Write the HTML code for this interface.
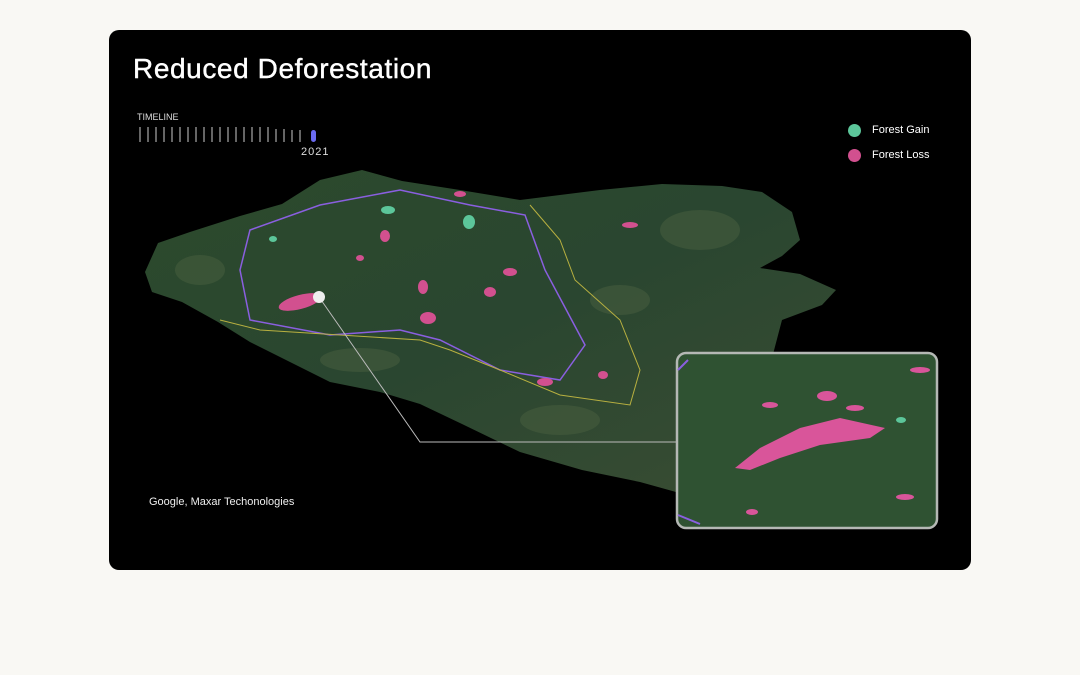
<!DOCTYPE html>
<html><head><style>
body{margin:0;width:1080px;height:675px;background:#f9f8f4;font-family:"Liberation Sans",sans-serif;overflow:hidden}
.card{position:absolute;left:109px;top:30px;width:862px;height:540px;background:#000;border-radius:10px;overflow:hidden}
.t{position:absolute;left:24px;top:23px;color:#fff;font-size:28px;letter-spacing:0.6px;font-weight:500;-webkit-text-stroke:0.4px #fff}
.tl{position:absolute;left:28px;top:82px;color:#ddd;font-size:9px}
.yr{position:absolute;left:192px;top:116px;color:#ddd;font-size:11px;letter-spacing:1px}
.lg{position:absolute;left:763px;color:#fff;font-size:11px}
.dot{position:absolute;left:-24px;top:0;width:13px;height:13px;border-radius:50%}
.cr{position:absolute;left:40px;top:466px;color:#eee;font-size:11px}
</style></head><body>
<div class="card">
<svg width="862" height="540" style="position:absolute;left:0;top:0">
<defs>
<linearGradient id="g" x1="0" y1="0" x2="1" y2="1"><stop offset="0" stop-color="#2c4a2c"/><stop offset=".5" stop-color="#2a4630"/><stop offset="1" stop-color="#3a4d33"/></linearGradient>
</defs>
<g transform="translate(-109,-30)">
<path d="M145,272 L158,243 L190,232 L240,216 L282,204 L320,180 L362,170 L402,181 L460,190 L520,200 L600,190 L662,184 L722,186 L762,192 L792,212 L800,240 L782,256 L760,268 L800,274 L836,290 L822,305 L782,320 L772,358 L690,352 L676,400 L676,492 L640,482 L582,470 L520,452 L462,424 L420,404 L380,392 L330,382 L290,362 L250,342 L218,322 L182,302 L152,292 Z" fill="url(#g)"/>
<g fill="#4a6040" opacity=".5">
<ellipse cx="700" cy="230" rx="40" ry="20"/><ellipse cx="620" cy="300" rx="30" ry="15"/><ellipse cx="360" cy="360" rx="40" ry="12"/><ellipse cx="560" cy="420" rx="40" ry="15"/><ellipse cx="200" cy="270" rx="25" ry="15"/>
</g>
<path d="M250,230 L320,205 L400,190 L470,205 L525,215 L545,270 L585,345 L560,380 L500,370 L440,340 L400,330 L330,335 L250,320 L240,270 Z" fill="none" stroke="#8a5fe0" stroke-width="1.5"/>
<path d="M530,205 L560,240 L575,280 L620,320 L640,370 L630,405 L560,395 L500,370 L450,350 L420,340 L260,330 L220,320" fill="none" stroke="#b8b040" stroke-width="1"/>
<g fill="#d2508f">
<ellipse cx="300" cy="302" rx="22" ry="7" transform="rotate(-15 300 302)"/>
<ellipse cx="428" cy="318" rx="8" ry="6"/><ellipse cx="423" cy="287" rx="5" ry="7"/>
<ellipse cx="490" cy="292" rx="6" ry="5"/><ellipse cx="510" cy="272" rx="7" ry="4"/>
<ellipse cx="385" cy="236" rx="5" ry="6"/><ellipse cx="360" cy="258" rx="4" ry="3"/>
<ellipse cx="460" cy="194" rx="6" ry="3"/><ellipse cx="545" cy="382" rx="8" ry="4"/>
<ellipse cx="630" cy="225" rx="8" ry="3"/><ellipse cx="603" cy="375" rx="5" ry="4"/>
</g>
<g fill="#5cc69a"><ellipse cx="388" cy="210" rx="7" ry="4"/><ellipse cx="469" cy="222" rx="6" ry="7"/><ellipse cx="273" cy="239" rx="4" ry="3"/></g>
<polyline points="319,297 420,442 676,442" fill="none" stroke="#bbb" stroke-width="1"/>
<circle cx="319" cy="297" r="6" fill="#eee"/>
<rect x="677" y="353" width="260" height="175" rx="9" fill="#2f5232" stroke="#b5b8b5" stroke-width="2.5"/>
<g fill="#d9559a">
<path d="M735,468 L760,448 L800,428 L840,418 L885,428 L870,438 L820,445 L780,458 L750,470 Z"/>
<ellipse cx="827" cy="396" rx="10" ry="5"/><ellipse cx="770" cy="405" rx="8" ry="3"/><ellipse cx="855" cy="408" rx="9" ry="3"/>
<ellipse cx="920" cy="370" rx="10" ry="3"/><ellipse cx="905" cy="497" rx="9" ry="3"/><ellipse cx="752" cy="512" rx="6" ry="3"/>
</g>
<ellipse cx="901" cy="420" rx="5" ry="3" fill="#5cc69a"/>
<path d="M678,515 L700,524 M678,370 L688,360" stroke="#8a5fe0" stroke-width="2"/>
</g>
</svg>
<div class="t">Reduced Deforestation</div>
<div class="tl">TIMELINE</div>
<svg width="180" height="16" style="position:absolute;left:30px;top:97px">
<g stroke="#ccc" stroke-width="1">
<line x1="1" y1="0" x2="1" y2="15"/><line x1="9" y1="0" x2="9" y2="15"/><line x1="17" y1="0" x2="17" y2="15"/><line x1="25" y1="0" x2="25" y2="15"/><line x1="33" y1="0" x2="33" y2="15"/><line x1="41" y1="0" x2="41" y2="15"/><line x1="49" y1="0" x2="49" y2="15"/><line x1="57" y1="0" x2="57" y2="15"/><line x1="65" y1="0" x2="65" y2="15"/><line x1="73" y1="0" x2="73" y2="15"/><line x1="81" y1="0" x2="81" y2="15"/><line x1="89" y1="0" x2="89" y2="15"/><line x1="97" y1="0" x2="97" y2="15"/><line x1="105" y1="0" x2="105" y2="15"/><line x1="113" y1="0" x2="113" y2="15"/><line x1="121" y1="0" x2="121" y2="15"/><line x1="129" y1="0" x2="129" y2="15"/><line x1="137" y1="2" x2="137" y2="15"/><line x1="145" y1="2" x2="145" y2="15"/><line x1="153" y1="3" x2="153" y2="15"/><line x1="161" y1="3" x2="161" y2="15"/>
</g>
<rect x="172" y="3" width="5" height="12" rx="2.5" fill="#6b6bf0"/>
</svg>
<div class="yr">2021</div>
<div class="lg" style="top:94px"><span class="dot" style="background:#5cc69a"></span>Forest Gain</div>
<div class="lg" style="top:119px"><span class="dot" style="background:#d2508f"></span>Forest Loss</div>
<div class="cr">Google, Maxar Techonologies</div>
</div>
</body></html>
